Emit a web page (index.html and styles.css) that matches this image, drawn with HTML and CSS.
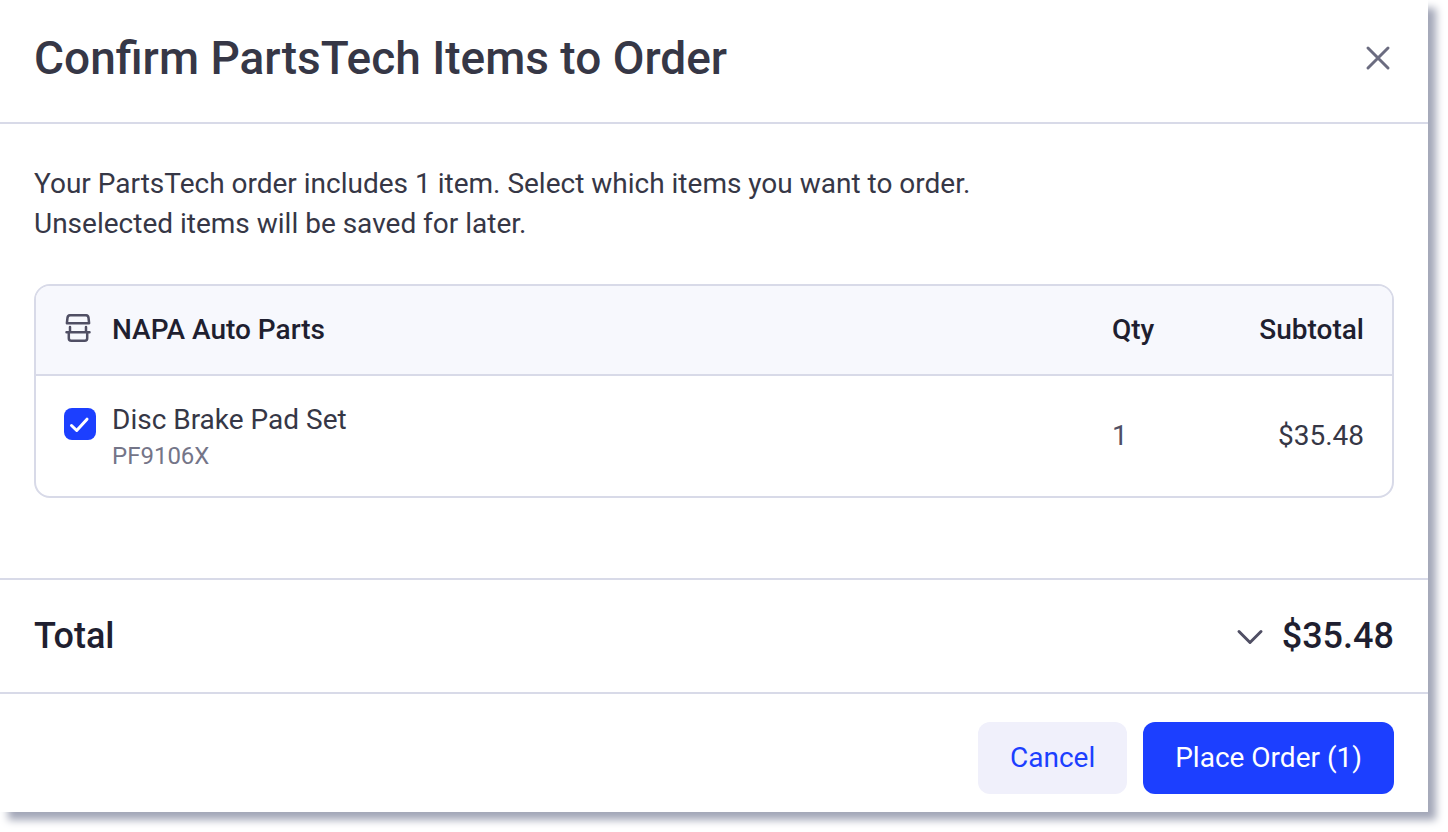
FILE: index.html
```html
<!DOCTYPE html>
<html lang="en">
<head>
<meta charset="utf-8">
<meta name="viewport" content="width=device-width, initial-scale=1">
<title>Confirm PartsTech Items to Order</title>
<link rel="stylesheet" href="styles.css">
</head>
<body>
<main class="dialog" role="dialog" aria-labelledby="dialog-title">
  <header class="dialog-header">
    <h1 class="dialog-title" id="dialog-title">Confirm PartsTech Items to Order</h1>
    <button class="icon-button" type="button" aria-label="Close">
      <svg class="icon-close" viewBox="0 0 32 32" aria-hidden="true"><path d="M6 6 26 26M26 6 6 26"/></svg>
    </button>
  </header>
  <section class="dialog-body">
    <p class="intro">Your PartsTech order includes 1 item. Select which items you want to order.<br>Unselected items will be saved for later.</p>
    <div class="card">
      <table class="items">
        <thead>
          <tr>
            <th class="item-col" scope="col">
              <div class="vendor">
                <svg class="icon-store" viewBox="0 0 28 32" aria-hidden="true"><path d="M6.500 1.200h15q2.600 0 3 2.500l.6 5.500H2.900l.6-5.500Q3.900 1.200 6.500 1.200ZM6 13v5M22 13v5M2.500 18.300h23M4.800 18.300v6q0 2.500 2.500 2.500h13.400q2.500 0 2.500-2.500v-6"/></svg>
                NAPA Auto Parts
              </div>
            </th>
            <th class="qty-col" scope="col">Qty</th>
            <th class="subtotal-col" scope="col">Subtotal</th>
          </tr>
        </thead>
        <tbody>
          <tr>
            <td class="item-col">
              <div class="item">
                <input class="checkbox" type="checkbox" id="item-1" checked>
                <label class="item-label" for="item-1">
                  <span class="item-name">Disc Brake Pad Set</span>
                  <span class="item-code">PF9106X</span>
                </label>
              </div>
            </td>
            <td class="qty-col qty">1</td>
            <td class="subtotal-col">$35.48</td>
          </tr>
        </tbody>
      </table>
    </div>
  </section>
  <section class="total">
    <h2 class="total-text">Total</h2>
    <button class="total-toggle total-text" type="button" aria-expanded="false">
      <svg class="icon-chevron" viewBox="0 0 28 28" aria-hidden="true"><path d="M3 9.500 14 20.500 25 9.500"/></svg>
      $35.48
    </button>
  </section>
  <footer class="actions">
    <button class="button button-secondary" type="button">Cancel</button>
    <button class="button button-primary" type="button">Place Order (1)</button>
  </footer>
</main>
</body>
</html>
```
FILE: styles.css
```css
* {
  box-sizing: border-box;
}

body {
  margin: 0;
  background: #fff;
  color: #363746;
  font: 400 28px/40px Roboto, "Liberation Sans", sans-serif;
}

button {
  padding: 0;
  border: 0;
  background: none;
  font: inherit;
  cursor: pointer;
}

svg {
  fill: none;
  stroke: currentColor;
  stroke-linecap: round;
  stroke-linejoin: round;
}

.dialog {
  margin: 0 20px 20px 0;
  background: #fff;
  box-shadow: 8px 8px 8px #a3a7b8;
}

.dialog-header {
  display: flex;
  align-items: center;
  justify-content: space-between;
  padding: 30px 34px 36px;
  border-bottom: 2px solid #d8dae8;
}

.dialog-title {
  margin: 0;
  font-size: 46px;
  font-weight: 500;
  line-height: 56px;
}

.icon-button {
  display: flex;
  color: #6b6c80;
}

.icon-close {
  width: 32px;
  height: 32px;
  stroke-width: 3;
}

.dialog-body {
  padding: 40px 34px 80px;
}

.intro {
  margin: 0 0 40px;
}

.card {
  overflow: hidden;
  border: 2px solid #d8dae8;
  border-radius: 16px;
}

.items {
  width: 100%;
  border-spacing: 0;
  table-layout: fixed;
}

.items th {
  padding: 24px 0;
  border-bottom: 2px solid #d8dae8;
  background: #f7f8fd;
  color: #1f1f30;
  font-weight: 500;
  text-align: left;
}

.items td {
  padding: 24px 0;
}

.items .item-col {
  padding-left: 28px;
}

.items .qty-col {
  width: 140px;
}

.items .subtotal-col {
  width: 140px;
  padding-right: 28px;
  text-align: right;
}

.vendor {
  display: flex;
  align-items: center;
  gap: 20px;
}

.icon-store {
  width: 28px;
  height: 32px;
  color: #504f64;
  stroke-width: 2.5;
}

.item {
  display: flex;
  gap: 16px;
}

.checkbox {
  width: 32px;
  height: 32px;
  margin: 8px 0 0;
  appearance: none;
  border: 2px solid #d8dae8;
  border-radius: 8px;
  background: #fff;
}

.checkbox:checked {
  border: 0;
  background: #1c3fff url("data:image/svg+xml,%3Csvg xmlns='http://www.w3.org/2000/svg' viewBox='0 0 32 32'%3E%3Cpath d='M7.500 17.500l5.200 5L23 11.200' fill='none' stroke='white' stroke-width='3' stroke-linecap='round' stroke-linejoin='round'/%3E%3C/svg%3E") center / 32px 32px no-repeat;
}

.item-label {
  display: flex;
  flex-direction: column;
}

.item-code {
  color: #747588;
  font-size: 24px;
  line-height: 32px;
}

.qty {
  color: #504f64;
}

.total {
  display: flex;
  align-items: center;
  justify-content: space-between;
  padding: 32px 34px;
  border: solid #d8dae8;
  border-width: 2px 0;
}

.total-text {
  margin: 0;
  color: #1f1f30;
  font-size: 36px;
  font-weight: 500;
  line-height: 48px;
}

.total-toggle {
  display: flex;
  align-items: center;
  gap: 18px;
}

.icon-chevron {
  width: 28px;
  height: 28px;
  color: #504f64;
  stroke-width: 3;
}

.actions {
  display: flex;
  justify-content: flex-end;
  gap: 16px;
  padding: 28px 34px 18px;
}

.button {
  padding: 16px 32px;
  border-radius: 12px;
}

.button-secondary {
  background: #f0f0fb;
  color: #1c3fff;
}

.button-primary {
  background: #1c3fff;
  color: #fff;
}
```
